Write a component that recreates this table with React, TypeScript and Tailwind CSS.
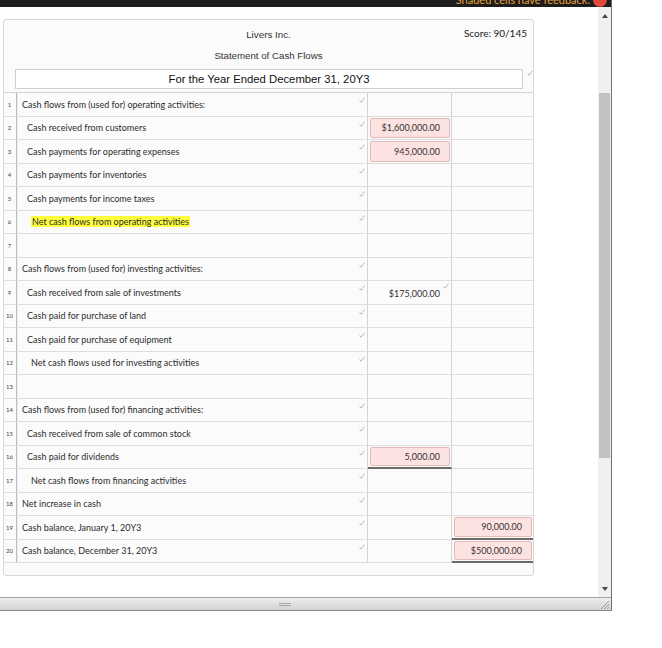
import clsx from "clsx";

const cn = clsx;

type Cell = { v: string; input?: boolean; underline?: boolean; check?: boolean };
type Row = { label: string; indent: 0 | 1 | 2; check: boolean; mark?: boolean; c2?: Cell; c3?: Cell };

const rows: Row[] = [
	{ label: "Cash flows from (used for) operating activities:", indent: 0, check: true },
	{ label: "Cash received from customers", indent: 1, check: true, c2: { v: "$1,600,000.00", input: true } },
	{ label: "Cash payments for operating expenses", indent: 1, check: true, c2: { v: "945,000.00", input: true } },
	{ label: "Cash payments for inventories", indent: 1, check: true },
	{ label: "Cash payments for income taxes", indent: 1, check: true },
	{ label: "Net cash flows from operating activities", indent: 2, check: true, mark: true },
	{ label: "", indent: 0, check: false },
	{ label: "Cash flows from (used for) investing activities:", indent: 0, check: true },
	{ label: "Cash received from sale of investments", indent: 1, check: true, c2: { v: "$175,000.00", check: true } },
	{ label: "Cash paid for purchase of land", indent: 1, check: true },
	{ label: "Cash paid for purchase of equipment", indent: 1, check: true },
	{ label: "Net cash flows used for investing activities", indent: 2, check: true },
	{ label: "", indent: 0, check: false },
	{ label: "Cash flows from (used for) financing activities:", indent: 0, check: true },
	{ label: "Cash received from sale of common stock", indent: 1, check: true },
	{ label: "Cash paid for dividends", indent: 1, check: true, c2: { v: "5,000.00", input: true, underline: true } },
	{ label: "Net cash flows from financing activities", indent: 2, check: true },
	{ label: "Net increase in cash", indent: 0, check: true },
	{ label: "Cash balance, January 1, 20Y3", indent: 0, check: true, c3: { v: "90,000.00", input: true, underline: true } },
	{ label: "Cash balance, December 31, 20Y3", indent: 0, check: true, c3: { v: "$500,000.00", input: true, underline: true } },
];

const narrow = "font-['Lato','Roboto',sans-serif]";

function Check({ className }: { className?: string }) {
	return (
		<svg className={cn("h-[6px] w-[6px] shrink-0", className)} viewBox="0 0 6 6" fill="none">
			<path d="M0.6 3.4 L2.1 5.2 L5.5 0.6" stroke="#98c298" strokeWidth="0.9" />
		</svg>
	);
}

function ValueCell({ cell, width }: { cell?: Cell; width: string }) {
	return (
		<div
			className={cn(
				"flex h-full shrink-0 border-r border-[#d4d4d4]",
				width,
				cell?.underline ? "border-b-2 border-b-[#6e6868]" : "border-b border-b-[#dedede]",
			)}
		>
			{cell?.input && (
				<div className="m-[1px] ml-[2px] flex flex-1 items-center justify-end rounded-[2px] border border-[#e2b8b8] bg-[#fde2e2] pr-[9px] text-[9px] text-[#333]">
					{cell.v}
				</div>
			)}
			{cell && !cell.input && (
				<div className="flex flex-1 items-center justify-end pr-[2px] text-[9px] text-[#333]">
					<span className="pt-[2px]">{cell.v}</span>
					{cell.check && <Check className="mb-auto ml-[3px] mt-[2px]" />}
				</div>
			)}
		</div>
	);
}

function SheetRow({ row, n }: { row: Row; n: number }) {
	return (
		<div className="flex h-[23.5px]">
			<div className="flex w-[13px] shrink-0 items-center justify-center border-b border-r border-[#bdbdbd] border-b-[#dedede] pr-[1px] text-[6px] text-[#444]">
				{n}
			</div>
			<div className="flex w-[351px] shrink-0 items-center justify-between border-b border-l border-r border-[#d4d4d4] border-b-[#dedede] border-l-[#ececec]">
				<span
					className={cn(
						"text-[9px] text-[#2b2b2b]",
						row.indent === 0 && "pl-[4px]",
						row.indent === 1 && "pl-[9px]",
						row.indent === 2 && "pl-[13px]",
					)}
				>
					<span className={cn(row.mark && "bg-[#ffff3b] px-[1px]")}>{row.label}</span>
				</span>
				{row.check && <Check className="mb-auto mr-[2px] mt-[4px]" />}
			</div>
			<ValueCell cell={row.c2} width="w-[84px]" />
			<ValueCell cell={row.c3} width="w-[81px] border-r-0" />
		</div>
	);
}

function Scrollbar() {
	return (
		<div className="flex w-[13px] shrink-0 flex-col bg-[#f0f0f0]">
			<div className="flex h-[17px] items-center justify-center">
				<div className="h-0 w-0 border-x-[3.5px] border-b-[4px] border-x-transparent border-b-[#4a4a4a]" />
			</div>
			<div className="h-[69px]" />
			<div className="mx-[1px] h-[365px] bg-[#c1c1c1]" />
			<div className="flex-1" />
			<div className="flex h-[17px] items-center justify-center">
				<div className="h-0 w-0 border-x-[3.5px] border-t-[4px] border-x-transparent border-t-[#4a4a4a]" />
			</div>
		</div>
	);
}

export default function App() {
	return (
		<div className={cn("h-[648px] w-[662px] overflow-hidden bg-white", narrow)}>
			<div className="flex h-[611px] w-[612px] flex-col border-r border-[#707070]">
				<div className="flex h-[7px] shrink-0 justify-end overflow-hidden bg-[#1d1d1d] pr-[4px]">
					<div className="-mt-[7px] flex items-center gap-[3px]">
						<span className="text-[11px] leading-[14px] text-[#e8a23a]">Shaded cells have feedback.</span>
						<span className="h-[14px] w-[14px] rounded-full bg-[#e0483c]" />
					</div>
				</div>

				<div className="flex min-h-0 flex-1">
					<div className="flex-1 bg-white pl-[3px] pt-[12px]">
						<div className="h-[557px] w-[531px] rounded-[3px] border border-[#d6d6d6] bg-[#fbfbfb]">
							<div className="grid grid-cols-[1fr_auto_1fr] pt-[9px] font-['Liberation_Sans',Arial,sans-serif] text-[9.8px] leading-[12px] text-[#333]">
								<div />
								<div>Livers Inc.</div>
								<div className={cn("self-start justify-self-end pr-[6px] text-[10px] leading-[8px] text-[#222]", narrow)}>
									Score: 90/145
								</div>
							</div>
							<div className="mt-[9px] text-center font-['Liberation_Sans',Arial,sans-serif] text-[9.7px] leading-[12px] text-[#333]">
								Statement of Cash Flows
							</div>
							<div className="mt-[7px] flex items-start">
								<div className="ml-[11px] flex h-[20px] w-[508px] items-center justify-center border border-[#cfcfcf] bg-white font-['Liberation_Sans',Arial,sans-serif] text-[11.3px] text-[#111]">
									For the Year Ended December 31, 20Y3
								</div>
								<Check className="ml-[4px] mt-[1px]" />
							</div>
							<div className="mt-[3px] border-t border-[#d4d4d4]">
								{rows.map((row, i) => (
									<SheetRow key={i} n={i + 1} row={row} />
								))}
							</div>
						</div>
					</div>
					<Scrollbar />
				</div>

				<div className="flex h-[14px] shrink-0 items-center border-y border-b-[#8a8a8a] border-t-[#a3a3a3] bg-gradient-to-b from-[#eeeeee] to-[#d3d3d3]">
					<div className="flex flex-1 justify-center">
						<div className="-ml-[30px] flex flex-col gap-[1px]">
							<div className="h-px w-[12px] bg-[#a9a9a9]" />
							<div className="h-px w-[12px] bg-[#a9a9a9]" />
						</div>
					</div>
					<svg className="mr-[1px] mt-[1px] h-[11px] w-[11px]" viewBox="0 0 11 11">
						<path d="M10 2 L2 10 M10 5 L5 10 M10 8 L8 10" stroke="#a0a0a0" strokeWidth="1" />
					</svg>
				</div>
			</div>
		</div>
	);
}
